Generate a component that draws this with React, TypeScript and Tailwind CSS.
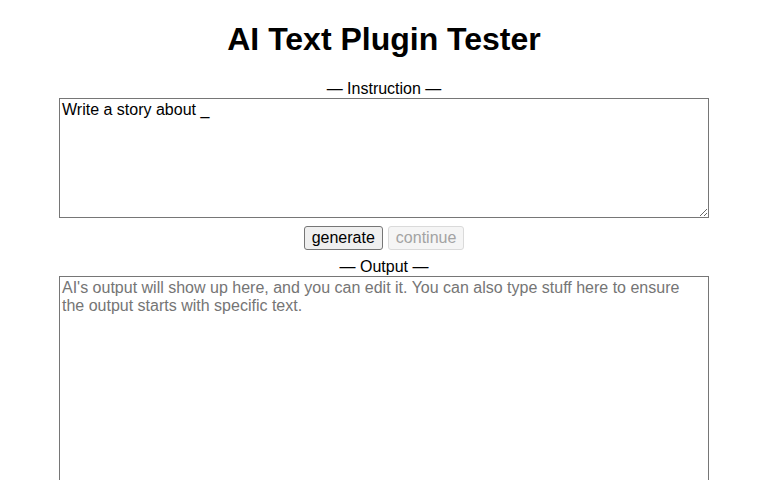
export default function App() {
  return (
    <div className="h-screen overflow-hidden bg-white text-black font-['Liberation_Sans',Arial,sans-serif] text-[16px]">
      <h1 className="pt-[21px] pb-[21px] text-center text-[32px] leading-[37px] font-bold">AI Text Plugin Tester</h1>
      <div className="mx-auto w-[650px] flex flex-col items-center">
        <div className="leading-[20px] h-[19px]">— Instruction —</div>
        <textarea
          defaultValue="Write a story about _"
          className="block w-[650px] h-[120px] border border-[#767676] px-[2px] py-[1px] leading-[20px] text-black resize-y font-['Liberation_Sans',Arial,sans-serif] outline-none"
        />
        <div className="flex gap-[5px] mt-[8px]">
          <button className="h-[24px] px-[7px] bg-[#efefef] border border-[#767676] rounded-[3px] leading-[20px]">generate</button>
          <button disabled className="h-[24px] px-[7px] bg-[#f5f5f5] border border-[#dadada] rounded-[3px] leading-[20px] text-[#a3a3a3]">continue</button>
        </div>
        <div className="leading-[20px] h-[19px] mt-[7px]">— Output —</div>
        <textarea
          placeholder="AI's output will show up here, and you can edit it. You can also type stuff here to ensure the output starts with specific text."
          className="block w-[650px] h-[300px] border border-[#767676] px-[2px] py-[2px] leading-[18px] resize-y placeholder:text-[#757575] font-['Liberation_Sans',Arial,sans-serif] outline-none"
        />
      </div>
    </div>
  );
}
